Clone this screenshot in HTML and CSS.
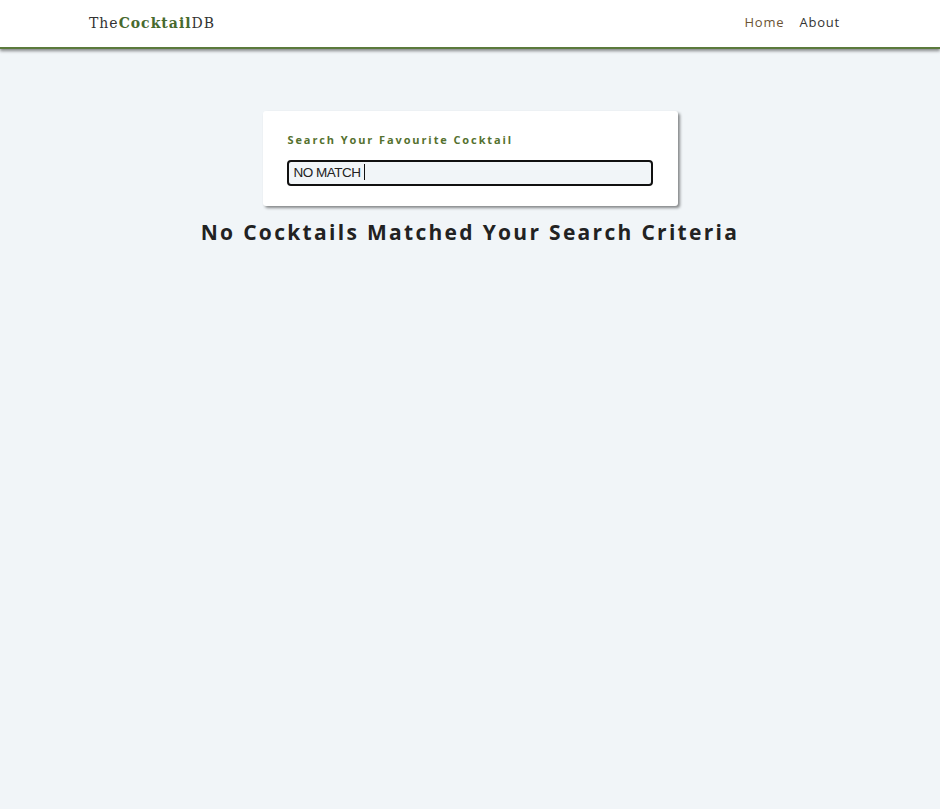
FILE: index.html
```html
<!DOCTYPE html>
<html>
<head>
<meta charset="utf-8">
<link rel="stylesheet" href="styles.css">
</head>
<body>
<nav class="navbar">
  <div class="nav-center">
    <a class="logo">The<span class="logo-accent">Cocktail</span>DB</a>
    <ul class="nav-links">
      <li><a class="nav-link active">Home</a></li>
      <li><a class="nav-link">About</a></li>
    </ul>
  </div>
</nav>
<main class="main">
  <section class="search">
    <form class="search-form">
      <label class="search-label" for="name">Search Your Favourite Cocktail</label>
      <div class="input-wrap">
        <input id="name" class="search-input" type="text" value="NO MATCH"><span class="caret"></span>
      </div>
    </form>
  </section>
  <h2 class="section-title">No Cocktails Matched Your Search Criteria</h2>
</main>
</body>
</html>
```
FILE: styles.css
```css
* { box-sizing: border-box; }
html, body { margin: 0; padding: 0; }
body {
  background: #f1f5f8;
  font-family: "Open Sans", "Liberation Sans", sans-serif;
  color: #222;
  height: 809px;
  overflow: hidden;
}
.navbar {
  background: #fff;
  height: 49px;
  border-bottom: 2px solid #5b7a3c;
  box-shadow: 0 2px 3px rgba(0,0,0,0.45);
}
.nav-center {
  width: 751px;
  margin-left: 89px;
  height: 47px;
  display: flex;
  align-items: center;
  justify-content: space-between;
  padding-bottom: 2px;
}
.logo {
  font-family: "DejaVu Serif", "Liberation Serif", serif;
  font-size: 14px;
  letter-spacing: 1px;
  color: #333;
}
.logo-accent { color: #476a2e; font-weight: bold; }
.nav-links {
  list-style: none;
  margin: 0 0 3px 0;
  padding: 0;
  display: flex;
  gap: 15px;
}
.nav-link {
  font-family: "Open Sans", sans-serif;
  font-size: 13px;
  letter-spacing: 0.8px;
  color: #333;
}
.nav-link.active { color: #6b5434; }
.main {
  display: flex;
  flex-direction: column;
  align-items: center;
  padding-top: 62px;
}
.search-form {
  width: 415px;
  height: 95px;
  background: #fff;
  border-radius: 3px;
  box-shadow: 2px 2px 3px rgba(0,0,0,0.45);
  padding: 22px 24px 0 24px;
  display: flex;
  flex-direction: column;
}
.search-label {
  font-size: 11px;
  font-weight: bold;
  letter-spacing: 1.9px;
  color: #55712f;
  margin-left: 1px;
  line-height: 14px;
}
.input-wrap {
  position: relative;
  margin-top: 13px;
}
.search-input {
  display: block;
  width: 366px;
  height: 26px;
  background: #f1f5f8;
  border: 2px solid #111;
  border-radius: 4px;
  padding: 0 0 2px 5px;
  font-family: "Liberation Sans", Arial, sans-serif;
  font-size: 13.5px;
  color: #222;
  letter-spacing: -0.5px;
  outline: none;
}
.caret {
  position: absolute;
  left: 77px;
  top: 4px;
  width: 1px;
  height: 16px;
  background: #111;
}
.section-title {
  margin: 12px 0 0 0;
  font-size: 21px;
  font-weight: bold;
  letter-spacing: 2.3px;
  color: #222;
  line-height: 28px;
}
```
